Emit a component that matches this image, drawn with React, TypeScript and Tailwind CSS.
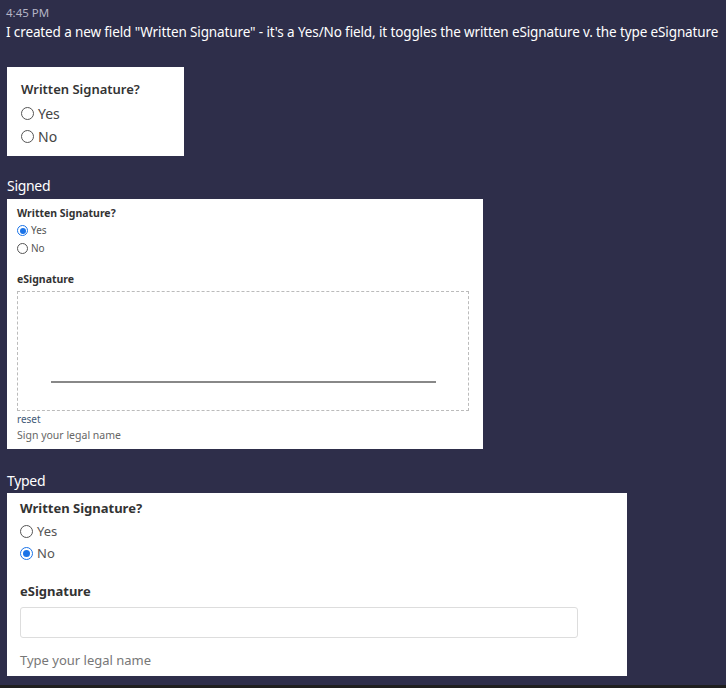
const font = { fontFamily: '"Segoe UI", "Noto Sans", "Open Sans", sans-serif' };

function Radio({ checked, size }: { checked?: boolean; size: "sm" | "md" }) {
  const box = size === "sm" ? "h-[11px] w-[11px]" : "h-[13px] w-[13px]";
  const dot = size === "sm" ? "h-[6px] w-[6px]" : "h-[7px] w-[7px]";
  if (checked) {
    return (
      <span className={`flex ${box} shrink-0 items-center justify-center rounded-full border border-[#1a73e8] bg-white`}>
        <span className={`${dot} rounded-full bg-[#1a73e8]`} />
      </span>
    );
  }
  return <span className={`${box} shrink-0 rounded-full border border-[#555] bg-white`} />;
}

function Option({ label, checked, size }: { label: string; checked?: boolean; size: "sm" | "md" }) {
  return (
    <div className={`flex items-center ${size === "sm" ? "gap-[3px] text-[10px]" : "gap-[4px] text-[13px]"} text-[#555]`}>
      <Radio checked={checked} size={size} />
      <span>{label}</span>
    </div>
  );
}

export default function App() {
  return (
    <div className="flex h-[688px] w-[726px] flex-col overflow-hidden bg-[#2e2e4a] text-white" style={font}>
      <div className="flex-1 px-[6px] pt-[4px]">
        <div className="text-[11.5px] leading-[18px] text-[#b4b4c4]">4:45 PM</div>
        <div className="whitespace-nowrap text-[13.5px] leading-[20px] tracking-[-0.12px] text-white">
          I created a new field "Written Signature" - it's a Yes/No field, it toggles the written eSignature v. the type eSignature
        </div>

        <div className="mt-[25px] ml-px w-[177px] bg-white px-[14px] pt-[12px] pb-[10px]">
          <div className="text-[13px] font-semibold leading-[20px] text-[#333]">Written Signature?</div>
          <div className="mt-[5px] flex flex-col gap-[4px] text-[#444]">
            <div className="flex items-center gap-[4px] text-[14px] leading-[19px]">
              <Radio size="md" />
              <span>Yes</span>
            </div>
            <div className="flex items-center gap-[4px] text-[14px] leading-[19px]">
              <Radio size="md" />
              <span>No</span>
            </div>
          </div>
        </div>

        <div className="mt-[20px] ml-px text-[14px] leading-[20px] tracking-[-0.3px]">Signed</div>
        <div className="mt-[3px] ml-px w-[476px] bg-white px-[10px] pt-[7px] pb-[7px]">
          <div className="text-[10.5px] font-bold leading-[14px] text-[#333]">Written Signature?</div>
          <div className="mt-[3px] flex flex-col gap-[3px] leading-[15px]">
            <Option label="Yes" checked size="sm" />
            <Option label="No" size="sm" />
          </div>
          <div className="mt-[16px] text-[10.5px] font-bold leading-[14px] text-[#333]">eSignature</div>
          <div className="mt-[5px] flex h-[120px] w-[452px] items-end justify-center border border-dashed border-[#bbb] pb-[27px]">
            <div className="h-[2px] w-[385px] bg-[#888]" />
          </div>
          <div className="mt-[1px] text-[10px] leading-[14px] text-[#3f5a78]">reset</div>
          <div className="mt-[2px] text-[10.5px] leading-[14px] text-[#666]">Sign your legal name</div>
        </div>

        <div className="mt-[22px] ml-px text-[14px] leading-[20px] tracking-[-0.3px]">Typed</div>
        <div className="mt-[2px] ml-px w-[620px] bg-white px-[13px] pt-[6px] pb-[7px]">
          <div className="text-[13px] font-bold leading-[18px] text-[#333]">Written Signature?</div>
          <div className="mt-[5px] flex flex-col gap-[4px] leading-[18px]">
            <Option label="Yes" size="md" />
            <Option label="No" checked size="md" />
          </div>
          <div className="mt-[20px] text-[13px] font-bold leading-[18px] text-[#333]">eSignature</div>
          <div className="mt-[7px] h-[31px] w-[558px] rounded-[3px] border border-[#ddd] bg-white" />
          <div className="mt-[13px] text-[13px] leading-[18px] text-[#777]">Type your legal name</div>
        </div>
      </div>
      <div className="h-[3px] bg-[#1f1f1f]" />
    </div>
  );
}
